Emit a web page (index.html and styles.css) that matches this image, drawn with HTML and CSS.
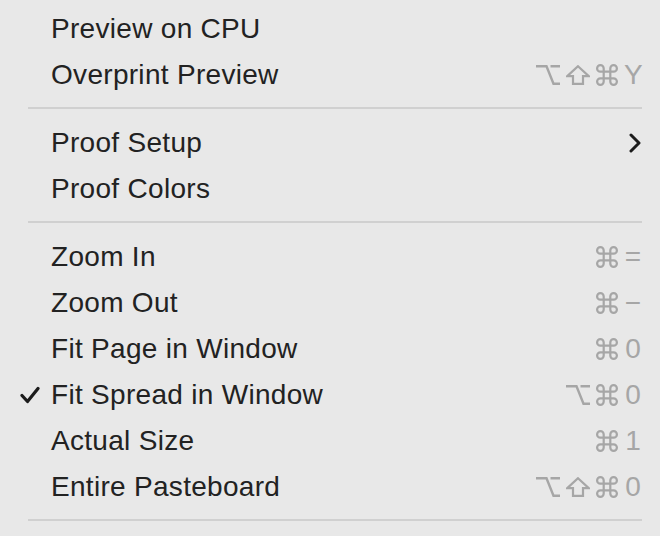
FILE: index.html
```html
<!DOCTYPE html>
<html lang="en">
<head>
    <meta charset="UTF-8">
    <title>View Menu</title>
    <link rel="stylesheet" href="styles.css">
</head>
<body>
    <div class="menu">
        <div class="item">
            <span class="check"></span>
            <span class="label">Preview on CPU</span>
        </div>
        <div class="item">
            <span class="check"></span>
            <span class="label">Overprint Preview</span>
            <span class="shortcut">
                <svg class="opt" viewBox="0 0 24 20"><path d="M0 1.3H10.5L17.5 18.7H24M14.5 1.3H24"/></svg>
                <svg class="shift" viewBox="0 0 24 20"><path d="M12 1.2L22.8 11.2H17V18.9H7V11.2H1.2Z"/></svg>
                <svg class="cmd" viewBox="0 0 20 20"><path d="M7 7V4A3 3 0 1 0 4 7H16A3 3 0 1 0 13 4V16A3 3 0 1 0 16 13H4A3 3 0 1 0 7 16Z"/></svg>
                <span class="key">Y</span>
            </span>
        </div>

        <div class="separator"></div>

        <div class="item">
            <span class="check"></span>
            <span class="label">Proof Setup</span>
            <svg class="chevron" viewBox="0 0 12 20"><path d="M2 2L10 10L2 18"/></svg>
        </div>
        <div class="item">
            <span class="check"></span>
            <span class="label">Proof Colors</span>
        </div>

        <div class="separator"></div>

        <div class="item">
            <span class="check"></span>
            <span class="label">Zoom In</span>
            <span class="shortcut">
                <svg class="cmd" viewBox="0 0 20 20"><path d="M7 7V4A3 3 0 1 0 4 7H16A3 3 0 1 0 13 4V16A3 3 0 1 0 16 13H4A3 3 0 1 0 7 16Z"/></svg>
                <span class="key">=</span>
            </span>
        </div>
        <div class="item">
            <span class="check"></span>
            <span class="label">Zoom Out</span>
            <span class="shortcut">
                <svg class="cmd" viewBox="0 0 20 20"><path d="M7 7V4A3 3 0 1 0 4 7H16A3 3 0 1 0 13 4V16A3 3 0 1 0 16 13H4A3 3 0 1 0 7 16Z"/></svg>
                <span class="key">&minus;</span>
            </span>
        </div>
        <div class="item">
            <span class="check"></span>
            <span class="label">Fit Page in Window</span>
            <span class="shortcut">
                <svg class="cmd" viewBox="0 0 20 20"><path d="M7 7V4A3 3 0 1 0 4 7H16A3 3 0 1 0 13 4V16A3 3 0 1 0 16 13H4A3 3 0 1 0 7 16Z"/></svg>
                <span class="key">0</span>
            </span>
        </div>
        <div class="item">
            <span class="check">
                <svg viewBox="0 0 20 18"><path d="M2 9.5L7.5 15.5L18 2.5"/></svg>
            </span>
            <span class="label">Fit Spread in Window</span>
            <span class="shortcut">
                <svg class="opt" viewBox="0 0 24 20"><path d="M0 1.3H10.5L17.5 18.7H24M14.5 1.3H24"/></svg>
                <svg class="cmd" viewBox="0 0 20 20"><path d="M7 7V4A3 3 0 1 0 4 7H16A3 3 0 1 0 13 4V16A3 3 0 1 0 16 13H4A3 3 0 1 0 7 16Z"/></svg>
                <span class="key">0</span>
            </span>
        </div>
        <div class="item">
            <span class="check"></span>
            <span class="label">Actual Size</span>
            <span class="shortcut">
                <svg class="cmd" viewBox="0 0 20 20"><path d="M7 7V4A3 3 0 1 0 4 7H16A3 3 0 1 0 13 4V16A3 3 0 1 0 16 13H4A3 3 0 1 0 7 16Z"/></svg>
                <span class="key">1</span>
            </span>
        </div>
        <div class="item">
            <span class="check"></span>
            <span class="label">Entire Pasteboard</span>
            <span class="shortcut">
                <svg class="opt" viewBox="0 0 24 20"><path d="M0 1.3H10.5L17.5 18.7H24M14.5 1.3H24"/></svg>
                <svg class="shift" viewBox="0 0 24 20"><path d="M12 1.2L22.8 11.2H17V18.9H7V11.2H1.2Z"/></svg>
                <svg class="cmd" viewBox="0 0 20 20"><path d="M7 7V4A3 3 0 1 0 4 7H16A3 3 0 1 0 13 4V16A3 3 0 1 0 16 13H4A3 3 0 1 0 7 16Z"/></svg>
                <span class="key">0</span>
            </span>
        </div>

        <div class="separator"></div>
    </div>
</body>
</html>
```

FILE: styles.css
```css
/* Reset */
body, div, span {
    margin: 0;
    padding: 0;
}

body {
    background-color: #e8e8e8;
    font-family: "Liberation Sans", Arial, sans-serif;
    color: #222222;
    height: 100vh;
    overflow: hidden;
}

/* Menu */
.menu {
    display: flex;
    flex-direction: column;
    padding-top: 6px;
}

.item {
    display: flex;
    align-items: center;
    height: 46px;
    padding-right: 18px;
    font-size: 28px;
    line-height: 46px;
}

.check {
    display: flex;
    align-items: center;
    width: 51px;
    height: 46px;
    padding-left: 20px;
    box-sizing: border-box;
}

.check svg {
    width: 20px;
    height: 18px;
    fill: none;
    stroke: #1c1c1c;
    stroke-width: 3.2;
    stroke-linecap: round;
    stroke-linejoin: round;
}

.label {
    flex: 1;
    white-space: nowrap;
    letter-spacing: 0.3px;
}

/* Shortcuts */
.shortcut {
    display: flex;
    align-items: center;
    gap: 6px;
    height: 46px;
    color: #a6a6a6;
}

.shortcut svg {
    fill: none;
    stroke: #a6a6a6;
}

.shortcut .opt {
    width: 24px;
    height: 20px;
    stroke-width: 2.4;
}

.shortcut .shift {
    width: 24px;
    height: 20px;
    stroke-width: 2.2;
    stroke-linejoin: miter;
}

.shortcut .cmd {
    width: 22px;
    height: 22px;
    stroke-width: 2;
}

.key {
    width: 18px;
    text-align: center;
}

/* Submenu arrow */
.chevron {
    width: 12px;
    height: 20px;
    margin-right: 1px;
    fill: none;
    stroke: #1c1c1c;
    stroke-width: 3;
    stroke-linecap: round;
    stroke-linejoin: round;
}

/* Separator */
.separator {
    height: 2px;
    margin: 9px 18px 11px 28px;
    background-color: #d0d0d0;
}
```
